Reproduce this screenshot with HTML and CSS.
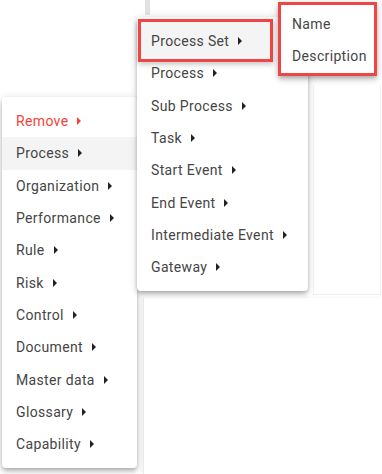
FILE: index.html
```html
<!DOCTYPE html>
<html lang="en">
<head>
    <meta charset="UTF-8">
    <title>Context menu</title>
    <link rel="stylesheet" href="styles.css">
</head>
<body>
    <div class="canvas">
        <div class="scroll-thumb"></div>
        <div class="side-panel"></div>
        <div class="sheet"></div>
    </div>

    <!-- level 1 -->
    <div class="menu menu-main">
        <div class="menu-item danger">Remove<span class="caret"></span></div>
        <div class="menu-item active">Process<span class="caret"></span></div>
        <div class="menu-item">Organization<span class="caret"></span></div>
        <div class="menu-item">Performance<span class="caret"></span></div>
        <div class="menu-item">Rule<span class="caret"></span></div>
        <div class="menu-item">Risk<span class="caret"></span></div>
        <div class="menu-item">Control<span class="caret"></span></div>
        <div class="menu-item">Document<span class="caret"></span></div>
        <div class="menu-item">Master data<span class="caret"></span></div>
        <div class="menu-item">Glossary<span class="caret"></span></div>
        <div class="menu-item">Capability<span class="caret"></span></div>
    </div>

    <!-- level 2 -->
    <div class="menu menu-sub">
        <div class="mark"></div>
        <div class="menu-item">Process Set<span class="caret"></span></div>
        <div class="menu-item">Process<span class="caret"></span></div>
        <div class="menu-item">Sub Process<span class="caret"></span></div>
        <div class="menu-item">Task<span class="caret"></span></div>
        <div class="menu-item">Start Event<span class="caret"></span></div>
        <div class="menu-item">End Event<span class="caret"></span></div>
        <div class="menu-item">Intermediate Event<span class="caret"></span></div>
        <div class="menu-item">Gateway<span class="caret"></span></div>
    </div>

    <!-- level 3 -->
    <div class="menu menu-leaf">
        <div class="menu-item">Name</div>
        <div class="menu-item">Description</div>
    </div>
</body>
</html>
```

FILE: styles.css
```css
* {
    margin: 0;
    padding: 0;
    box-sizing: border-box;
}

body {
    font-family: Roboto, "Liberation Sans", sans-serif;
    font-size: 14px;
    background: #fff;
    width: 382px;
    height: 474px;
    overflow: hidden;
    position: relative;
}

/* page behind the menus */
.canvas {
    display: grid;
    grid-template-columns: 145px 168px 1fr;
    grid-template-rows: 85px 213px 1fr;
    height: 474px;
}

.scroll-thumb {
    grid-column: 2;
    grid-row: 1;
    width: 5px;
    height: 15px;
    background: #e2e2e2;
}

.side-panel {
    grid-column: 3;
    grid-row: 2;
    margin: 0 1px 3px 0;
    border: 1px solid #f0f0f0;
    border-top: none;
    background: #fff;
}

.sheet {
    grid-column: 2 / span 2;
    grid-row: 3;
    margin-left: -2px;
    border-left: 1px solid #ececec;
    box-shadow: -2px 0 4px rgba(0, 0, 0, 0.06);
    background: #fff;
}

/* menus */
.menu {
    position: absolute;
    background: #fff;
    border-radius: 4px;
    padding: 8px 0;
    box-shadow: 0 2px 4px -1px rgba(0, 0, 0, 0.2),
                0 4px 5px 0 rgba(0, 0, 0, 0.14),
                0 1px 10px 0 rgba(0, 0, 0, 0.12);
}

.menu-main {
    left: 2px;
    top: 97px;
    width: 135px;
}

.menu-sub {
    left: 137px;
    top: 17px;
    width: 171px;
}

.menu-leaf {
    left: 278px;
    top: 2px;
    width: 99px;
    border: 3px solid #f04545;
    border-radius: 0;
    padding: 3px 0 0;
}

.menu-item {
    position: relative;
    display: flex;
    align-items: center;
    height: 32.3px;
    padding-left: 14px;
    color: #454545;
    letter-spacing: 0.35px;
    white-space: nowrap;
}

.menu-leaf .menu-item {
    padding-left: 11px;
}

.menu-item.active {
    background: #f4f4f4;
}

.menu-item.danger {
    color: #f44336;
}

.caret {
    margin-left: 9px;
    width: 0;
    height: 0;
    border-left: 4px solid #222;
    border-top: 4px solid transparent;
    border-bottom: 4px solid transparent;
}

.menu-item.danger .caret {
    border-left-color: #f44336;
}

/* red highlight drawn round "Process Set" */
.mark {
    position: absolute;
    left: 1px;
    top: 2px;
    width: 135px;
    height: 43px;
    border: 3px solid #f04545;
    background: #f4f4f4;
    box-shadow: 0 2px 6px rgba(0, 0, 0, 0.25);
}
```
